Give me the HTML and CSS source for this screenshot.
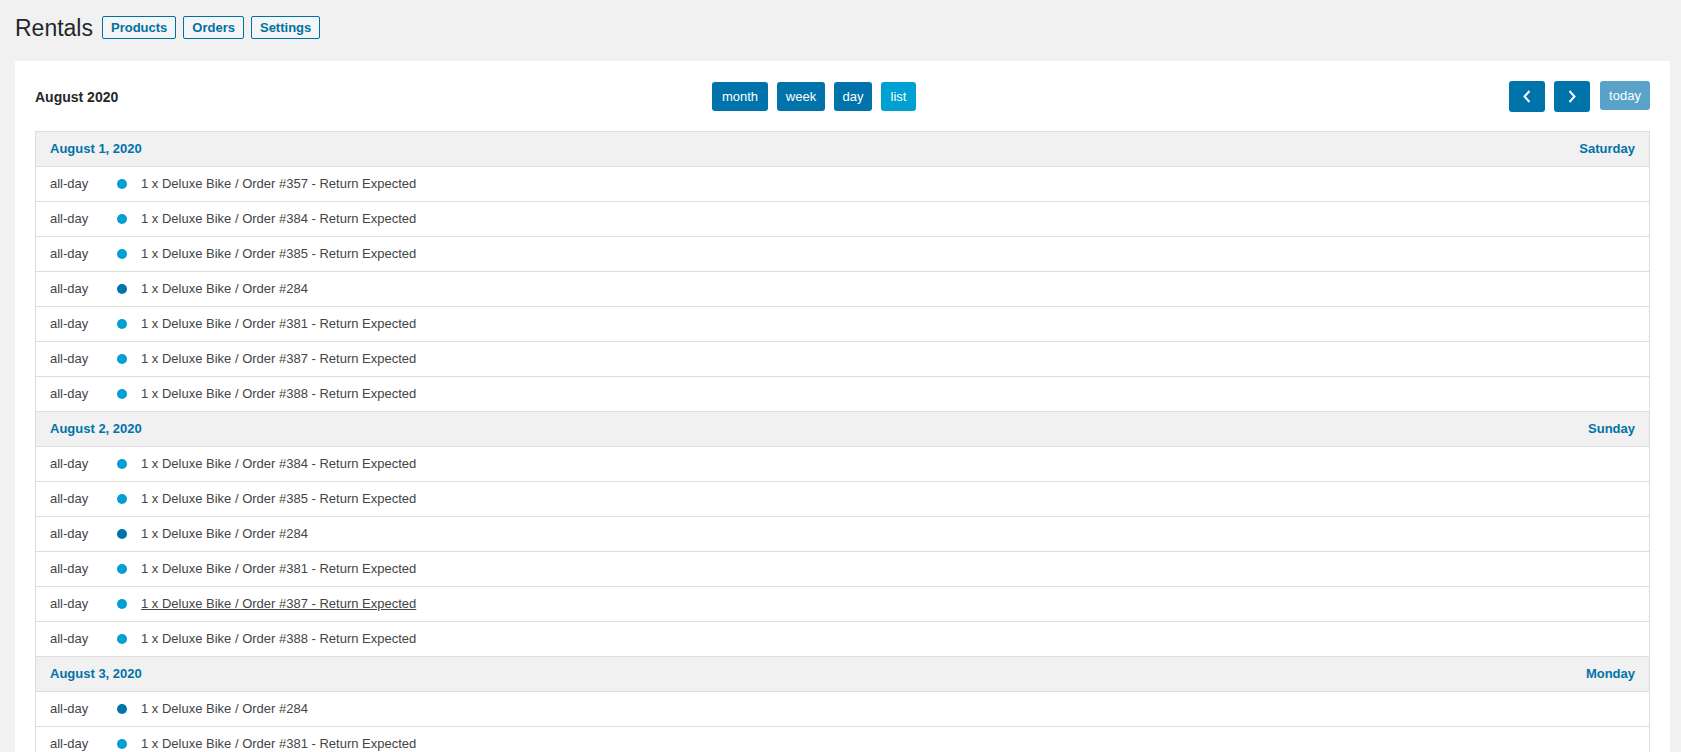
FILE: index.html
```html
<!DOCTYPE html>
<html lang="en">
<head>
<meta charset="utf-8">
<title>Rentals</title>
<link rel="stylesheet" href="styles.css">
</head>
<body>
<div class="page">
  <header class="page-head">
    <h1 class="title">Rentals</h1>
    <nav class="title-actions">
      <a class="title-action" href="#">Products</a>
      <a class="title-action" href="#">Orders</a>
      <a class="title-action" href="#">Settings</a>
    </nav>
  </header>

  <section class="panel">
    <div class="toolbar">
      <h2 class="month-title">August 2020</h2>
      <div class="view-group">
        <button class="btn btn-month">month</button>
        <button class="btn btn-week">week</button>
        <button class="btn btn-day">day</button>
        <button class="btn btn-list btn-active">list</button>
      </div>
      <div class="nav-group">
        <button class="btn btn-icon" aria-label="prev"><svg width="8" height="13" viewBox="0 0 8 13"><polyline points="6.5,1 1.5,6.5 6.5,12" fill="none" stroke="#fff" stroke-width="2"/></svg></button>
        <button class="btn btn-icon" aria-label="next"><svg width="8" height="13" viewBox="0 0 8 13"><polyline points="1.5,1 6.5,6.5 1.5,12" fill="none" stroke="#fff" stroke-width="2"/></svg></button>
        <button class="btn btn-today btn-disabled">today</button>
      </div>
    </div>

    <div class="event-list">
      <div class="day-row"><span>August 1, 2020</span><span>Saturday</span></div>
      <div class="event-row"><span class="time">all-day</span><span class="dot"></span><span class="event-title">1 x Deluxe Bike / Order #357 - Return Expected</span></div>
      <div class="event-row"><span class="time">all-day</span><span class="dot"></span><span class="event-title">1 x Deluxe Bike / Order #384 - Return Expected</span></div>
      <div class="event-row"><span class="time">all-day</span><span class="dot"></span><span class="event-title">1 x Deluxe Bike / Order #385 - Return Expected</span></div>
      <div class="event-row"><span class="time">all-day</span><span class="dot dot-dark"></span><span class="event-title">1 x Deluxe Bike / Order #284</span></div>
      <div class="event-row"><span class="time">all-day</span><span class="dot"></span><span class="event-title">1 x Deluxe Bike / Order #381 - Return Expected</span></div>
      <div class="event-row"><span class="time">all-day</span><span class="dot"></span><span class="event-title">1 x Deluxe Bike / Order #387 - Return Expected</span></div>
      <div class="event-row"><span class="time">all-day</span><span class="dot"></span><span class="event-title">1 x Deluxe Bike / Order #388 - Return Expected</span></div>

      <div class="day-row"><span>August 2, 2020</span><span>Sunday</span></div>
      <div class="event-row"><span class="time">all-day</span><span class="dot"></span><span class="event-title">1 x Deluxe Bike / Order #384 - Return Expected</span></div>
      <div class="event-row"><span class="time">all-day</span><span class="dot"></span><span class="event-title">1 x Deluxe Bike / Order #385 - Return Expected</span></div>
      <div class="event-row"><span class="time">all-day</span><span class="dot dot-dark"></span><span class="event-title">1 x Deluxe Bike / Order #284</span></div>
      <div class="event-row"><span class="time">all-day</span><span class="dot"></span><span class="event-title">1 x Deluxe Bike / Order #381 - Return Expected</span></div>
      <div class="event-row"><span class="time">all-day</span><span class="dot"></span><a class="event-title event-link is-hover" href="#">1 x Deluxe Bike / Order #387 - Return Expected</a></div>
      <div class="event-row"><span class="time">all-day</span><span class="dot"></span><span class="event-title">1 x Deluxe Bike / Order #388 - Return Expected</span></div>

      <div class="day-row"><span>August 3, 2020</span><span>Monday</span></div>
      <div class="event-row"><span class="time">all-day</span><span class="dot dot-dark"></span><span class="event-title">1 x Deluxe Bike / Order #284</span></div>
      <div class="event-row"><span class="time">all-day</span><span class="dot"></span><span class="event-title">1 x Deluxe Bike / Order #381 - Return Expected</span></div>
    </div>
  </section>
</div>
</body>
</html>
```

FILE: styles.css
```css
html, body {
  margin: 0;
  padding: 0;
  background: #f1f1f1;
}

body {
  font-family: "Liberation Sans", Arial, sans-serif;
  font-size: 13px;
  color: #444;
}

.page {
  padding: 0 11px 0 15px;
}

.page-head {
  display: flex;
  align-items: flex-start;
  padding-top: 14px;
}

.title {
  margin: 0;
  font-size: 23px;
  font-weight: 400;
  line-height: 29px;
  color: #23282d;
}

.title-actions {
  display: flex;
  gap: 7px;
  margin-left: 9px;
  margin-top: 2px;
}

.title-action {
  display: block;
  border: 1px solid #0071a1;
  border-radius: 2px;
  padding: 4px 8px;
  line-height: 13px;
  font-size: 13px;
  font-weight: 700;
  color: #0071a1;
  background: #f3f5f6;
  text-decoration: none;
}

.panel {
  margin-top: 18px;
  background: #fff;
  padding: 20px;
}

.toolbar {
  display: flex;
  align-items: center;
  height: 31px;
  margin-bottom: 19px;
}

.month-title {
  flex: 0 0 677px;
  margin: 0;
  font-size: 14px;
  font-weight: 700;
  color: #23282d;
}

.view-group {
  display: flex;
  gap: 9px;
}

.nav-group {
  display: flex;
  gap: 9px;
  margin-left: auto;
}

.btn {
  height: 29px;
  padding: 0;
  border: none;
  border-radius: 3px;
  background: #0073aa;
  color: #fff;
  font-family: "Liberation Sans", Arial, sans-serif;
  font-size: 13px;
  line-height: 29px;
  cursor: pointer;
}

.btn-month { width: 56px; }
.btn-week { width: 48px; }
.btn-day { width: 38px; }
.btn-list { width: 35px; }

.btn-active {
  background: #00a0d2;
}

.btn-icon {
  width: 36px;
  height: 31px;
  display: flex;
  align-items: center;
  justify-content: center;
}

.btn-today {
  width: 50px;
  margin-left: 1px;
}

.btn-disabled {
  opacity: 0.65;
  cursor: default;
}

.event-list {
  border: 1px solid #ddd;
  border-top: none;
}

.day-row,
.event-row {
  display: flex;
  align-items: center;
  border-top: 1px solid #ddd;
  padding: 8px 14px;
  line-height: 18px;
  font-size: 13px;
}

.day-row {
  justify-content: space-between;
  background: #f1f1f1;
  font-weight: 700;
  color: #0073aa;
}

.time {
  flex: 0 0 39px;
  margin-right: 28px;
  white-space: nowrap;
  color: #444;
}

.dot {
  flex: 0 0 10px;
  height: 10px;
  border-radius: 50%;
  background: #00a0d2;
  margin-right: 14px;
}

.dot-dark {
  background: #0073aa;
}

.event-title {
  color: #444;
}

.event-link {
  text-decoration: none;
}

.event-link.is-hover {
  text-decoration: underline;
}
```
